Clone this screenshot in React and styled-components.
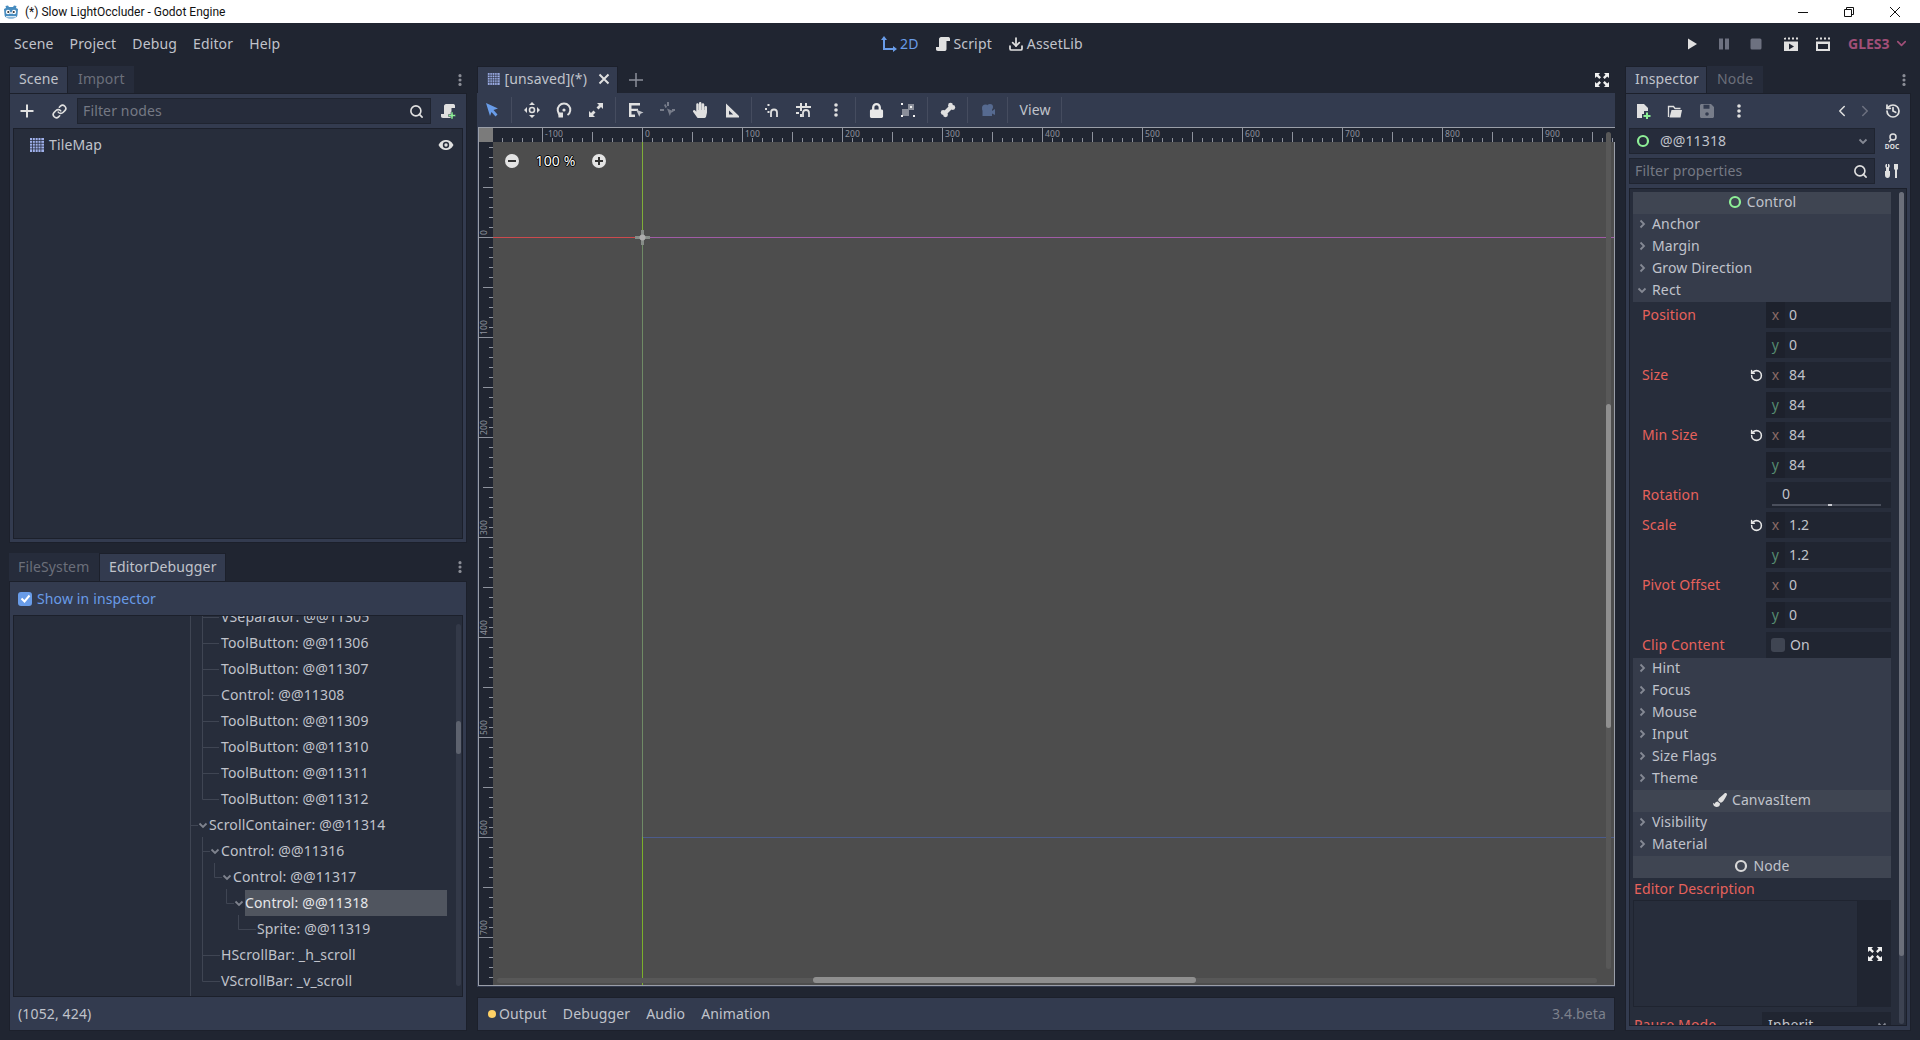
import styled, { createGlobalStyle } from "styled-components";
import { Link, Search, RotateCcw, History, Download, ChevronLeft, ChevronRight, ChevronDown } from "lucide-react";
import { FaHandPaper, FaPaintBrush, FaLock } from "react-icons/fa";

const GlobalStyle = createGlobalStyle`
    html, body {
        margin: 0;
        padding: 0;
        background: #202531;
        overflow: hidden;
    }
    * { box-sizing: border-box; }
`

const Window = styled.div`
    width: 1920px;
    height: 1040px;
    overflow: hidden;
    background: #202531;
    color: #c0c3cb;
    font-family: "Noto Sans", sans-serif;
    font-size: 14px;
    line-height: 20px;
    letter-spacing: 0.14px;
    white-space: nowrap;
`

/* title bar */
const TitleBar = styled.div`
    height: 23px;
    background: #fff;
    color: #111;
    display: flex;
    align-items: center;
    padding-left: 3px;
    font-family: Roboto, sans-serif;
    font-size: 12px;
    letter-spacing: 0;
`
const TitleText = styled.span`
    margin-left: 6px;
`
const WinButtons = styled.div`
    margin-left: auto;
    display: flex;
    gap: 36px;
    padding-right: 20px;
`

/* menu bar */
const MenuBar = styled.div`
    height: 43px;
    padding-bottom: 2px;
    display: flex;
    align-items: center;
`
const MainMenu = styled.div`
    width: 881px;
    padding-left: 14px;
    display: flex;
    gap: 16px;
`
const ModeSwitch = styled.div`
    display: flex;
    gap: 16px;
`
const Mode = styled.div`
    display: flex;
    align-items: center;
    gap: 3px;
    color: ${(p) => (p.$active ? "#699ce8" : "#c0c3cb")};
`
const PlayBar = styled.div`
    margin-left: auto;
    display: flex;
    align-items: center;
`
const PlayButton = styled.div`
    width: 32px;
    margin-left: ${(p) => p.$gap || 0}px;
    display: flex;
    justify-content: center;
`
const Driver = styled.div`
    display: flex;
    align-items: center;
    gap: 4px;
    width: 72px;
    margin-left: 9px;
    color: #a14f78;
    font-weight: 700;
    letter-spacing: 0;
`

/* docks */
const Workspace = styled.div`
    display: flex;
    height: 965px;
    padding-left: 9px;
`
const LeftColumn = styled.div`
    width: 458px;
    display: flex;
    flex-direction: column;
    gap: 10px;
`
const CenterColumn = styled.div`
    width: 1138px;
    margin-left: 10px;
    display: flex;
    flex-direction: column;
`
const RightColumn = styled.div`
    width: 286px;
    margin-left: 10px;
    display: flex;
    flex-direction: column;
`
const Dock = styled.div`
    height: ${(p) => p.$height}px;
    display: flex;
    flex-direction: column;
`
const TabRow = styled.div`
    height: ${(p) => p.$height || 27}px;
    flex: none;
    display: flex;
    align-items: stretch;
`
const Tab = styled.div`
    width: ${(p) => p.$width}px;
    display: flex;
    align-items: center;
    padding-left: ${(p) => (p.$pad === undefined ? 9 : p.$pad)}px;
    padding-bottom: 2px;
    background: ${(p) => (p.$active ? "#333b4f" : "#262c3b")};
    color: ${(p) => (p.$active ? "#c0c3cb" : "#6b6f7a")};
    border: 1px solid ${(p) => (p.$active ? "#1c202b" : "transparent")};
    border-bottom: none;
`
const TabMenu = styled.div`
    margin-left: auto;
    width: 14px;
    display: flex;
    align-items: center;
    justify-content: center;
`
const Panel = styled.div`
    flex: 1;
    min-height: 0;
    background: #333b4f;
    border: 1px solid #1c202b;
    display: flex;
    flex-direction: column;
    position: relative;
`
const ToolRow = styled.div`
    height: 34px;
    flex: none;
    display: flex;
    align-items: center;
    padding-left: 1px;
`
const IconButton = styled.div`
    width: ${(p) => p.$width || 32}px;
    height: 26px;
    flex: none;
    display: flex;
    align-items: center;
    justify-content: center;
`
const SearchBox = styled.div`
    height: 26px;
    width: ${(p) => p.$width}px;
    margin-left: ${(p) => p.$gap || 0}px;
    flex: none;
    display: flex;
    align-items: center;
    justify-content: space-between;
    padding: 0 6px 0 5px;
    background: #262c3b;
    border: 1px solid #1f2430;
    color: #757984;
`
const SceneTree = styled.div`
    flex: 1;
    margin: 0 3px 3px;
    background: #272d3b;
    border: 1px solid #1c202b;
    padding: 3px 17px 3px 15px;
`
const SceneNode = styled.div`
    display: flex;
    align-items: center;
    height: 26px;
    gap: 4px;
`
const EyeSlot = styled.div`
    margin-left: auto;
    margin-right: -9px;
    display: flex;
`

/* debugger */
const CheckRow = styled.div`
    height: 33px;
    flex: none;
    display: flex;
    align-items: center;
    gap: 5px;
    padding-left: 8px;
    color: #699ce8;
`
const CheckMark = styled.div`
    width: 14px;
    height: 14px;
    border-radius: 3px;
    background: #699ce8;
    display: flex;
    align-items: center;
    justify-content: center;
`
const RemoteTree = styled.div`
    height: 382px;
    flex: none;
    margin: 0 3px;
    background: #272d3b;
    border: 1px solid #1c202b;
    position: relative;
    overflow: hidden;
`
const RowList = styled.div`
    margin-top: -12px;
    position: relative;
`
const TreeRow = styled.div`
    height: 26px;
    display: flex;
    align-items: center;
    padding-left: ${(p) => p.$x - 14}px;
`
const RowFold = styled.span`
    width: 10px;
    margin-left: -11px;
    margin-right: 1px;
    display: flex;
    justify-content: center;
`
const RowLabel = styled.span`
    ${(p) => p.$selected && "width: 202px; height: 26px; line-height: 26px; background: #50555f; color: #e6e7ea;"}
`
const TreeLines = styled.svg`
    position: absolute;
    left: 0;
    top: 0;
`
const MousePos = styled.div`
    flex: 1;
    display: flex;
    align-items: center;
    padding-left: 8px;
`
const Track = styled.div`
    position: absolute;
    left: ${(p) => p.$x}px;
    top: ${(p) => p.$y}px;
    width: ${(p) => p.$w}px;
    height: ${(p) => p.$h}px;
    border-radius: 3px;
    background: ${(p) => p.$color};
`

/* main screen */
const ScreenTabs = styled.div`
    height: 27px;
    flex: none;
    display: flex;
    align-items: stretch;
`
const SceneTab = styled.div`
    width: 141px;
    display: flex;
    align-items: center;
    padding-left: 9px;
    padding-bottom: 2px;
    gap: 4px;
    background: #333b4f;
    border: 1px solid #1c202b;
    border-bottom: none;
`
const AddTab = styled.div`
    margin-left: 9px;
    display: flex;
    align-items: center;
    width: 18px;
    justify-content: center;
`
const ScreenCorner = styled.div`
    margin-left: auto;
    margin-right: 5px;
    display: flex;
    align-items: center;
`
const ScreenPanel = styled.div`
    height: 894px;
    flex: none;
    background: #333b4f;
    display: flex;
    flex-direction: column;
`
const CanvasTools = styled.div`
    height: 34px;
    flex: none;
    margin-left: -1px;
    display: flex;
    align-items: center;
`
const ToolSep = styled.div`
    width: 1px;
    height: 26px;
    flex: none;
    margin: 0 4px 0 3px;
    background: #454c5f;
`
const ViewMenu = styled.div`
    width: 46px;
    text-align: center;
`
const Viewport = styled.div`
    height: 859px;
    margin-left: 1px;
    background: #4d4d4d;
    border: 1px solid #9a9ea8;
    position: relative;
`
const RulerArt = styled.svg`
    display: block;
`
const ZoomBar = styled.div`
    position: absolute;
    left: 25px;
    top: 23px;
    display: flex;
    align-items: center;
    color: #fff;
    text-shadow: -1px 0 #000, 1px 0 #000, 0 -1px #000, 0 1px #000;
`
const ZoomLabel = styled.span`
    width: 71px;
    text-align: center;
`
const BottomBar = styled.div`
    margin-top: 10px;
    height: 34px;
    flex: none;
    background: #333b4f;
    border: 1px solid #1c202b;
    display: flex;
    align-items: center;
    padding: 0 0 1px 10px;
`
const DotMark = styled.span`
    width: 8px;
    height: 8px;
    border-radius: 50%;
    background: #ffd166;
    margin-right: 3px;
`
const BottomItem = styled.span`
    margin-right: 16px;
`
const Version = styled.span`
    margin-left: auto;
    margin-right: 8px;
    color: #7d818c;
`

/* inspector */
const InspectorTools = styled.div`
    height: 34px;
    flex: none;
    display: flex;
    align-items: center;
    padding-left: 1px;
`
const NavGroup = styled.div`
    margin-left: auto;
    display: flex;
    align-items: center;
`
const PickerRow = styled.div`
    height: 26px;
    flex: none;
    margin: 0 0 4px 3px;
    display: flex;
    align-items: center;
`
const ObjectPicker = styled.div`
    width: 246px;
    height: 26px;
    display: flex;
    align-items: center;
    padding: 0 6px;
    gap: 10px;
    background: #262c3b;
    border: 1px solid #1f2430;
`
const PickerChevron = styled.span`
    margin-left: auto;
    display: flex;
`
const PropBox = styled.div`
    margin: 0 3px 4px;
    height: 838px;
    flex: none;
    background: #272d3b;
    border: 1px solid #1c202b;
    padding: 3px 0 0 3px;
    overflow: hidden;
    position: relative;
`
const PropColumn = styled.div`
    width: 258px;
    display: flex;
    flex-direction: column;
`
const Category = styled.div`
    height: 22px;
    flex: none;
    padding-bottom: 2px;
    background: #3f4552;
    display: flex;
    align-items: center;
    justify-content: center;
    gap: 5px;
`
const Fold = styled.div`
    height: 22px;
    flex: none;
    background: #363c4b;
    display: flex;
    align-items: center;
    padding: 0 0 2px 4px;
    gap: 5px;
`
const PropList = styled.div`
    display: flex;
    flex-direction: column;
    gap: 4px;
`
const PropRow = styled.div`
    height: 26px;
    flex: none;
    display: flex;
    align-items: center;
`
const PropName = styled.div`
    width: 133px;
    flex: none;
    height: 26px;
    display: flex;
    align-items: center;
    justify-content: space-between;
    padding: 0 3px 0 9px;
    color: #e8625c;
`
const PropField = styled.div`
    flex: 1;
    height: 26px;
    display: flex;
    align-items: center;
    background: #202531;
    position: relative;
`
const Axis = styled.span`
    width: 19px;
    height: 26px;
    line-height: 26px;
    text-align: center;
    background: #1d212c;
    color: ${(p) => (p.$axis === "x" ? "#8a6a66" : "#568a70")};
    margin-right: 4px;
`
const SliderValue = styled.span`
    margin-left: 16px;
    margin-bottom: 2px;
`
const SliderLine = styled.div`
    position: absolute;
    left: 6px;
    right: 10px;
    bottom: 2px;
    height: 2px;
    background: #4a4f5c;
`
const SliderKnob = styled.div`
    position: absolute;
    left: 56px;
    top: 0;
    width: 4px;
    height: 2px;
    background: #c8cad0;
`
const CheckBlank = styled.span`
    width: 14px;
    height: 14px;
    margin: 0 5px;
    border-radius: 3px;
    background: #3f4552;
`
const DescLabel = styled.div`
    height: 22px;
    line-height: 22px;
    flex: none;
    padding-left: 1px;
    color: #e8625c;
`
const DescEditor = styled.div`
    height: 107px;
    flex: none;
    display: flex;
    background: #272d3b;
`
const DescText = styled.div`
    flex: 1;
    border: 1px solid #1f2430;
`
const DescExpand = styled.div`
    width: 33px;
    background: #202531;
    display: flex;
    align-items: center;
    justify-content: center;
`
const PauseRow = styled.div`
    height: 26px;
    flex: none;
    margin-top: 5px;
    display: flex;
    align-items: center;
    color: #e8625c;
    padding-left: 1px;
`
const PauseField = styled.div`
    margin-left: auto;
    width: 129px;
    height: 26px;
    background: #202531;
    color: #c0c3cb;
    display: flex;
    align-items: center;
    justify-content: space-between;
    padding: 0 4px 0 6px;
`

/* icons */
const Ico = ({ size = 16, fill = "#e0e0e0", children, vb = "0 0 16 16" }) => (
    <svg width={size} height={size} viewBox={vb} fill={fill}>{children}</svg>
)

const GodotLogo = () => (
    <Ico size={16}>
        <path fill="#478cbf" d="M1 5l2-1-.5-2 2.500-.5L6 3h4l1-1.500 2.500.5L13 4l2 1-.5 5.500c0 2-1.500 4-6.500 4s-6.500-2-6.500-4z" />
        <circle cx="5" cy="8" r="2.200" fill="#fff" />
        <circle cx="11" cy="8" r="2.200" fill="#fff" />
        <circle cx="5.300" cy="8" r="1.100" fill="#333" />
        <circle cx="10.700" cy="8" r="1.100" fill="#333" />
        <rect x="7.300" y="8" width="1.400" height="2" fill="#fff" />
        <path d="M3 12h10v1.500H3z" fill="#d5e6f2" />
    </Ico>
)
const MinimizeGlyph = () => <Ico size={10} fill="none" vb="0 0 10 10"><path d="M0 5.500h10" stroke="#111" /></Ico>
const RestoreGlyph = () => <Ico size={10} fill="none" vb="0 0 10 10"><path d="M.5 2.500h7v7h-7zM2.500 2.500v-2h7v7h-2" stroke="#111" /></Ico>
const CloseGlyph = () => <Ico size={10} fill="none" vb="0 0 10 10"><path d="M0 0l10 10M10 0L0 10" stroke="#111" /></Ico>

const Axes2D = () => (
    <Ico fill="#699ce8">
        <path d="M3 3v10h9" fill="none" stroke="#699ce8" strokeWidth="2" />
        <path d="M3 0l3 4H0zM16 13l-4-3v6z" />
    </Ico>
)
const scrollPath = "M6 1h7.500c1 0 1.500 1 1.500 2v2h-3.500v8c0 1.500-1 2-2 2H3c-1.500 0-2-1-2-2v-2h3V3c0-1 1-2 2-2z"
const ScriptGlyph = () => <Ico><path d={scrollPath} /></Ico>
const ScriptAdd = () => (
    <Ico>
        <path d={scrollPath} />
        <path d="M11 9h2v2.500h2.500v2H13V16h-2v-2.500H8.500v-2H11z" fill="#8eef97" stroke="#333b4f" strokeWidth=".5" />
    </Ico>
)
const PlayGlyph = () => <Ico><path d="M4 2.500l9 5.500-9 5.500z" /></Ico>
const PauseGlyph = () => <Ico fill="#6d7180"><path d="M3 2.500h4v11H3zM9 2.500h4v11H9z" /></Ico>
const StopGlyph = () => <Ico fill="#6d7180"><rect x="2.500" y="2.500" width="11" height="11" rx="1.500" /></Ico>
const Clapper = ({ inner }) => (
    <Ico>
        <path d="M1 5.500h14V15H1zM1 2l2-.5v2H1zM5 1.500h2v2H5zM9 1.500h2v2H9zM13 1.500h2v2h-2z" />
        {inner}
    </Ico>
)
const MoviePlay = () => <Clapper inner={<path d="M6 7.500l5 3-5 3z" fill="#202531" />} />
const MovieScene = () => <Clapper inner={<rect x="3" y="8" width="10" height="5" fill="#202531" />} />

const Kebab = ({ color = "#8a8d96" }) => (
    <Ico fill={color}>
        <circle cx="8" cy="3" r="1.800" />
        <circle cx="8" cy="8" r="1.800" />
        <circle cx="8" cy="13" r="1.800" />
    </Ico>
)
const PlusGlyph = () => <Ico><path d="M7 1.500h2V7h5.500v2H9v5.500H7V9H1.500V7H7z" /></Ico>
const TileGrid = ({ color = "#a5b7f3" }) => (
    <Ico fill={color}>
        <path d="M1 1h14v14H1z" opacity=".95" />
        <path d="M3.500 1v14M6.300 1v14M9.100 1v14M11.900 1v14M1 3.500h14M1 6.300h14M1 9.100h14M1 11.900h14" stroke="#2b3142" strokeWidth=".8" />
    </Ico>
)
const EyeGlyph = () => (
    <Ico>
        <path fillRule="evenodd" d="M.5 8C2.500 4 5.500 3 8 3s5.500 1 7.500 5c-2 4-5 5-7.500 5S2.500 12 .5 8zM8 4.800a3.200 3.200 0 1 0 0 6.400 3.200 3.200 0 0 0 0-6.400z" />
        <circle cx="8" cy="8" r="1.700" />
    </Ico>
)
const FoldRight = () => <Ico size={10} fill="none" vb="0 0 10 10"><path d="M3.500 1.500L7 5 3.500 8.500" stroke="#858994" strokeWidth="1.800" /></Ico>
const FoldDown = ({ color = "#858994" }) => <Ico size={10} fill="none" vb="0 0 10 10"><path d="M1.500 3.500L5 7l3.500-3.500" stroke={color} strokeWidth="1.800" /></Ico>
const Ring = ({ color }) => <Ico size={14} fill="none" vb="0 0 14 14"><circle cx="7" cy="7" r="5" stroke={color} strokeWidth="2.200" /></Ico>

const SelectArrow = () => (
    <Ico fill="#699ce8">
        <path d="M2 1l12 5.500-4.500 1.500 4 4.500-2 2-4-4.500L6 14z" />
    </Ico>
)
const MoveGlyph = () => (
    <Ico>
        <path d="M8 0l3 3H5zM8 16l3-3H5zM0 8l3-3v6zM16 8l-3-3v6z" />
        <circle cx="8" cy="8" r="2.500" fill="none" stroke="#e0e0e0" strokeWidth="1.600" />
    </Ico>
)
const RotateGlyph = () => (
    <Ico>
        <path d="M4.500 13A6.300 6.300 0 1 1 11.500 13" fill="none" stroke="#e0e0e0" strokeWidth="2" />
        <path d="M2 10.500h5V15.500H2.500z" />
        <circle cx="8" cy="8" r="1.600" />
    </Ico>
)
const ScaleGlyph = () => (
    <Ico>
        <path d="M9 1h6v6l-2-2-2.500 2.500L8.500 5.500 11 3zM7 15H1V9l2 2 2.500-2.500 2 2L5 13z" />
    </Ico>
)
const ListSelect = () => (
    <Ico>
        <path d="M1 1h11v2.500H3.500v3.200H10v2.300H3.500v3.500H7V15H1z" />
        <path d="M8 7.500l7.500 3-3 1.200-1.200 3z" fill="#c4c6cc" />
    </Ico>
)
const PivotGlyph = () => (
    <Ico fill="#777c8a">
        <path d="M7 0h2v4H7zM0 7h4v2H0zM12 7h3v2h-3zM4 3l1.500-1L7 5 5.500 6z" />
        <path d="M7 6.500l7 3-3 1.200-1.200 3.300z" />
    </Ico>
)
const RulerGlyph = () => <Ico><path fillRule="evenodd" d="M2 1.500l13 12.500v1.500H2zM5 8.500v4h4.200z" /></Ico>
const SmartSnap = () => (
    <Ico>
        <path d="M7 15v-4.500a3 3 0 0 1 6 0V15" fill="none" stroke="#e0e0e0" strokeWidth="1.800" />
        <path d="M3.500 2h2v2h-2zM1 6h2v2H1zM3.500 9h2v2h-2z" />
    </Ico>
)
const GridSnap = () => (
    <Ico>
        <path d="M7 15v-4a3 3 0 0 1 6 0v4" fill="none" stroke="#e0e0e0" strokeWidth="1.800" />
        <path d="M4 1h2v3h3V1h2v3h4v2H0V4h4zM4 6h2v3H4zM4 12h2v3H4zM0 10h3v2H0z" />
    </Ico>
)
const GroupGlyph = () => (
    <Ico>
        <path d="M2 7h7V14H2z" fill="#8a8e99" />
        <path d="M8 2h6v6H8z" fill="#8a8e99" />
        <path d="M10 4h2v2h-2zM1 1h2v2H1zM1 13h2v2H1zM13 13h2v2h-2z" fill="#f2f2f2" />
    </Ico>
)
const BoneGlyph = () => (
    <Ico>
        <path d="M4 12L12 4" stroke="#e0e0e0" strokeWidth="4" />
        <circle cx="3.200" cy="10.500" r="2.400" /><circle cx="5.500" cy="12.800" r="2.400" />
        <circle cx="10.500" cy="3.200" r="2.400" /><circle cx="12.800" cy="5.500" r="2.400" />
    </Ico>
)
const CameraGlyph = () => (
    <Ico fill="#566a90">
        <circle cx="5.500" cy="6" r="3.500" /><circle cx="10" cy="5" r="3" />
        <path d="M2.500 7h9.500v7H2.500zM12 9l3-2v6l-3-1.500z" />
    </Ico>
)
const cornerPath = "M1 1h5L4.500 2.800 7 5.300 5.300 7 2.800 4.500 1 6z"
const Corners = ({ color = "#f0f0f0" }) => (
    <Ico fill={color}>
        <path d={cornerPath} />
        <path transform="rotate(90 8 8)" d={cornerPath} />
        <path transform="rotate(180 8 8)" d={cornerPath} />
        <path transform="rotate(270 8 8)" d={cornerPath} />
    </Ico>
)
const NewFile = () => (
    <Ico>
        <path d="M2 1h7l4 4v3H9v3H7v4H2z" />
        <path d="M11 9.500h2V12h2.500v2H13v2h-2v-2H8.500v-2H11z" fill="#8eef97" />
    </Ico>
)
const FolderGlyph = () => (
    <Ico fill="none">
        <path d="M1.500 14V3.500h5l1.500 2h5.500" stroke="#e0e0e0" strokeWidth="1.300" />
        <path d="M2.500 14.500L4.500 7H15l-1.500 7.500z" fill="#e0e0e0" />
    </Ico>
)
const SaveGlyph = () => (
    <Ico fill="#787d8a">
        <path fillRule="evenodd" d="M1 2.500C1 1.700 1.700 1 2.500 1H12l3 3v9.500c0 .8-.7 1.500-1.500 1.500h-11C1.700 15 1 14.300 1 13.500zM4.500 1.800v4h6v-4z" />
        <circle cx="8" cy="11" r="1.800" fill="#333b4f" />
    </Ico>
)
const DocGlyph = () => (
    <svg width="16" height="16" viewBox="0 0 16 16" fill="none">
        <circle cx="9" cy="4" r="3" stroke="#e0e0e0" strokeWidth="1.500" />
        <path d="M7 6.500L5 9" stroke="#e0e0e0" strokeWidth="1.500" />
        <text x="8" y="15.500" textAnchor="middle" fontSize="6.500" fontWeight="700" fill="#e0e0e0" fontFamily="Noto Sans">DOC</text>
    </svg>
)
const ToolsGlyph = () => (
    <Ico>
        <path d="M3 1h1v3h1V1h1c1 1 1 3 0 4v3h1v4c0 2-1 3-2.500 3S2 14 2 12V8h1V5C2 4 2 2 3 1z" transform="translate(-1 0)" />
        <path d="M10 1h4v5l-1 1v8h-2V7l-1-1z" />
    </Ico>
)
const SearchGlyph = () => <Search size={15} strokeWidth={2.6} color="#e0e0e0" />
const RevertGlyph = () => <RotateCcw size={13} strokeWidth={2.8} color="#e8e8e8" />

const KebabTab = () => <TabMenu><Kebab /></TabMenu>

const remoteRows = [
    { x: 221, text: "VSeparator: @@11305" },
    { x: 221, text: "ToolButton: @@11306" },
    { x: 221, text: "ToolButton: @@11307" },
    { x: 221, text: "Control: @@11308" },
    { x: 221, text: "ToolButton: @@11309" },
    { x: 221, text: "ToolButton: @@11310" },
    { x: 221, text: "ToolButton: @@11311" },
    { x: 221, text: "ToolButton: @@11312" },
    { x: 209, text: "ScrollContainer: @@11314", fold: true },
    { x: 221, text: "Control: @@11316", fold: true },
    { x: 233, text: "Control: @@11317", fold: true },
    { x: 245, text: "Control: @@11318", fold: true, selected: true },
    { x: 257, text: "Sprite: @@11319" },
    { x: 221, text: "HScrollBar: _h_scroll" },
    { x: 221, text: "VScrollBar: _v_scroll" },
]

const treeLinePath = [
    "M190.500 616V996",
    "M202.500 616V799.500",
    "M202.500 617.500H219M202.500 643.500H219M202.500 669.500H219M202.500 695.500H219M202.500 721.500H219M202.500 747.500H219M202.500 773.500H219M202.500 799.500H219",
    "M191 825.500H198",
    "M202.500 837V981.500H220M202.500 955.500H220M202.500 851.500H210",
    "M214.500 863V877.500H222",
    "M226.500 889V903.500H234",
    "M238.500 915V929.500H256",
].join(" ")

const rectProps = [
    { label: "Position", axis: "x", value: "0" },
    { axis: "y", value: "0" },
    { label: "Size", revert: true, axis: "x", value: "84" },
    { axis: "y", value: "84" },
    { label: "Min Size", revert: true, axis: "x", value: "84" },
    { axis: "y", value: "84" },
    { label: "Rotation", slider: true, value: "0" },
    { label: "Scale", revert: true, axis: "x", value: "1.2" },
    { axis: "y", value: "1.2" },
    { label: "Pivot Offset", axis: "x", value: "0" },
    { axis: "y", value: "0" },
    { label: "Clip Content", check: true, value: "On" },
]

const PropLine = ({ item }) => (
    <PropRow>
        <PropName>
            <span>{item.label}</span>
            {item.revert && <RevertGlyph />}
        </PropName>
        <PropField>
            {item.axis && <Axis $axis={item.axis}>{item.axis}</Axis>}
            {item.check && <CheckBlank />}
            {item.slider
                ? <>
                    <SliderValue>{item.value}</SliderValue>
                    <SliderLine><SliderKnob /></SliderLine>
                </>
                : item.value}
        </PropField>
    </PropRow>
)

const FoldRow = ({ open, children }) => (
    <Fold>
        {open ? <FoldDown /> : <FoldRight />}
        <span>{children}</span>
    </Fold>
)

// every tick of the canvas rulers is drawn from the scene origin at 642,237
const RulerLines = () => {
    const top = []
    const left = []
    for (let x = 642 - 140; x < 1614; x += 10) {
        const k = (x - 642) / 10
        const y0 = k % 10 === 0 ? 128 : k % 5 === 0 ? 132 : 138
        top.push(<path key={x} d={`M${x + 0.5} ${y0}V142`} stroke="#8e929d" />)
        if (k % 10 === 0) {
            top.push(<text key={"t" + x} x={x + 3} y="137" fontSize="8.500" fill="#8e929d" fontFamily="Noto Sans">{k * 10}</text>)
        }
    }
    for (let y = 237 - 90; y < 985; y += 10) {
        const k = (y - 237) / 10
        const x1 = k % 10 === 0 ? 479 : k % 5 === 0 ? 483 : 489
        left.push(<path key={y} d={`M${x1} ${y + 0.5}H493`} stroke="#8e929d" />)
        if (k % 10 === 0 && k >= 0) {
            left.push(<text key={"t" + y} transform={`translate(487 ${y - 2}) rotate(-90)`} fontSize="8.500" fill="#8e929d" fontFamily="Noto Sans">{k * 10}</text>)
        }
    }
    return (
        <RulerArt width="1136" height="857" viewBox="479 128 1136 857">
            <rect x="493" y="128" width="1122" height="14" fill="#202531" />
            <rect x="479" y="142" width="14" height="844" fill="#202531" />
            <rect x="479" y="128" width="14" height="14" fill="#7b7b7b" />
            {top}
            {left}
            <path d="M642.500 837.500H1614" stroke="#4c5c8c" />
            <path d="M493 237.500H642" stroke="#cc4a4e" />
            <path d="M642 237.500H1614" stroke="#a05ca6" />
            <path d="M642.500 142V237" stroke="#7fae38" />
            <path d="M642.500 237V837" stroke="#6f8a66" />
            <path d="M642.500 837V985" stroke="#7bb02a" />
            <path d="M642.500 230V245M635 237.500H650" stroke="#868c88" strokeWidth="3" />
            <circle cx="642.500" cy="237.500" r="3" fill="#adadad" />
            <rect x="497" y="978" width="1100" height="5" rx="2.500" fill="#585858" />
            <rect x="813" y="977" width="383" height="6" rx="3" fill="#8f8f8f" />
            <rect x="1606" y="132" width="5" height="837" rx="2.500" fill="#585858" />
            <rect x="1606" y="404" width="5" height="324" rx="2.500" fill="#8f8f8f" />
        </RulerArt>
    )
}

const ZoomButton = ({ mark }) => (
    <Ico>
        <circle cx="8" cy="8" r="7" fill="#e4e4e4" />
        <path d={mark} stroke="#333" strokeWidth="2" />
    </Ico>
)

const App = () => {
    return (
        <Window>
            <GlobalStyle />
            <TitleBar>
                <GodotLogo />
                <TitleText>(*) Slow LightOccluder - Godot Engine</TitleText>
                <WinButtons>
                    <MinimizeGlyph />
                    <RestoreGlyph />
                    <CloseGlyph />
                </WinButtons>
            </TitleBar>
            <MenuBar>
                <MainMenu>
                    <span>Scene</span>
                    <span>Project</span>
                    <span>Debug</span>
                    <span>Editor</span>
                    <span>Help</span>
                </MainMenu>
                <ModeSwitch>
                    <Mode $active><Axes2D />2D</Mode>
                    <Mode><ScriptGlyph />Script</Mode>
                    <Mode><Download size={16} strokeWidth={2.6} color="#e0e0e0" />AssetLib</Mode>
                </ModeSwitch>
                <PlayBar>
                    <PlayButton><PlayGlyph /></PlayButton>
                    <PlayButton><PauseGlyph /></PlayButton>
                    <PlayButton><StopGlyph /></PlayButton>
                    <PlayButton $gap={3}><MoviePlay /></PlayButton>
                    <PlayButton><MovieScene /></PlayButton>
                    <Driver>GLES3<ChevronDown size={15} strokeWidth={2.6} color="#a14f78" /></Driver>
                </PlayBar>
            </MenuBar>
            <Workspace>
                <LeftColumn>
                    <Dock $height={477}>
                        <TabRow>
                            <Tab $width={59} $active>Scene</Tab>
                            <Tab $width={66}>Import</Tab>
                            <KebabTab />
                        </TabRow>
                        <Panel>
                            <ToolRow>
                                <IconButton><PlusGlyph /></IconButton>
                                <IconButton><Link size={15} strokeWidth={2.6} color="#e0e0e0" /></IconButton>
                                <SearchBox $width={354} $gap={2}>Filter nodes<SearchGlyph /></SearchBox>
                                <IconButton $width={34}><ScriptAdd /></IconButton>
                            </ToolRow>
                            <SceneTree>
                                <SceneNode>
                                    <TileGrid />
                                    <span>TileMap</span>
                                    <EyeSlot><EyeGlyph /></EyeSlot>
                                </SceneNode>
                            </SceneTree>
                        </Panel>
                    </Dock>
                    <Dock $height={478}>
                        <TabRow $height={28}>
                            <Tab $width={90} $pad={8}>FileSystem</Tab>
                            <Tab $width={127} $active>EditorDebugger</Tab>
                            <KebabTab />
                        </TabRow>
                        <Panel>
                            <CheckRow>
                                <CheckMark>
                                    <svg width="11" height="11" viewBox="0 0 11 11" fill="none"><path d="M1.500 5.500L4.500 8.500 9.500 2.500" stroke="#fff" strokeWidth="2" /></svg>
                                </CheckMark>
                                Show in inspector
                            </CheckRow>
                            <RemoteTree>
                                <TreeLines width="448" height="380" viewBox="14 616 448 380">
                                    <path d={treeLinePath} stroke="#3f4553" fill="none" />
                                </TreeLines>
                                <RowList>
                                    {remoteRows.map((row) => (
                                        <TreeRow key={row.text} $x={row.x}>
                                            {row.fold && <RowFold><FoldDown color="#7f838e" /></RowFold>}
                                            <RowLabel $selected={row.selected}>{row.text}</RowLabel>
                                        </TreeRow>
                                    ))}
                                </RowList>
                                <Track $x={442} $y={8} $w={5} $h={362} $color="#333948" />
                                <Track $x={442} $y={105} $w={5} $h={33} $color="#5d626e" />
                            </RemoteTree>
                            <MousePos>(1052, 424)</MousePos>
                        </Panel>
                    </Dock>
                </LeftColumn>
                <CenterColumn>
                    <ScreenTabs>
                        <SceneTab>
                            <TileGrid />
                            <span>[unsaved](*)</span>
                            <IconButton $width={26}>
                                <svg width="12" height="12" viewBox="0 0 12 12" fill="none"><path d="M1.500 1.500l9 9M10.500 1.500l-9 9" stroke="#e0e0e0" strokeWidth="2" /></svg>
                            </IconButton>
                        </SceneTab>
                        <AddTab>
                            <svg width="14" height="14" viewBox="0 0 14 14" fill="none"><path d="M7 0v14M0 7h14" stroke="#8a8e99" strokeWidth="1.500" /></svg>
                        </AddTab>
                        <ScreenCorner><Corners /></ScreenCorner>
                    </ScreenTabs>
                    <ScreenPanel>
                        <CanvasTools>
                            <IconButton><SelectArrow /></IconButton>
                            <ToolSep />
                            <IconButton><MoveGlyph /></IconButton>
                            <IconButton><RotateGlyph /></IconButton>
                            <IconButton><ScaleGlyph /></IconButton>
                            <ToolSep />
                            <IconButton><ListSelect /></IconButton>
                            <IconButton><PivotGlyph /></IconButton>
                            <IconButton><FaHandPaper size={16} color="#e0e0e0" /></IconButton>
                            <IconButton><RulerGlyph /></IconButton>
                            <ToolSep />
                            <IconButton><SmartSnap /></IconButton>
                            <IconButton><GridSnap /></IconButton>
                            <IconButton><Kebab color="#e0e0e0" /></IconButton>
                            <ToolSep />
                            <IconButton><FaLock size={15} color="#e8e8e8" /></IconButton>
                            <IconButton><GroupGlyph /></IconButton>
                            <ToolSep />
                            <IconButton><BoneGlyph /></IconButton>
                            <ToolSep />
                            <IconButton><CameraGlyph /></IconButton>
                            <ToolSep />
                            <ViewMenu>View</ViewMenu>
                            <ToolSep />
                        </CanvasTools>
                        <Viewport>
                            <RulerLines />
                            <ZoomBar>
                                <ZoomButton mark="M4 8h8" />
                                <ZoomLabel>100 %</ZoomLabel>
                                <ZoomButton mark="M4 8h8M8 4v8" />
                            </ZoomBar>
                        </Viewport>
                    </ScreenPanel>
                    <BottomBar>
                        <DotMark />
                        <BottomItem>Output</BottomItem>
                        <BottomItem>Debugger</BottomItem>
                        <BottomItem>Audio</BottomItem>
                        <BottomItem>Animation</BottomItem>
                        <Version>3.4.beta</Version>
                    </BottomBar>
                </CenterColumn>
                <RightColumn>
                    <TabRow>
                        <Tab $width={82} $active>Inspector</Tab>
                        <Tab $width={56}>Node</Tab>
                        <KebabTab />
                    </TabRow>
                    <Panel>
                        <InspectorTools>
                            <IconButton><NewFile /></IconButton>
                            <IconButton><FolderGlyph /></IconButton>
                            <IconButton><SaveGlyph /></IconButton>
                            <IconButton><Kebab color="#e0e0e0" /></IconButton>
                            <NavGroup>
                                <IconButton $width={23}><ChevronLeft size={18} strokeWidth={2} color="#e0e0e0" /></IconButton>
                                <IconButton $width={23}><ChevronRight size={18} strokeWidth={2} color="#6d7180" /></IconButton>
                                <IconButton $width={34}><History size={16} strokeWidth={2.6} color="#e0e0e0" /></IconButton>
                            </NavGroup>
                        </InspectorTools>
                        <PickerRow>
                            <ObjectPicker>
                                <Ring color="#8eef97" />
                                <span>@@11318</span>
                                <PickerChevron><FoldDown /></PickerChevron>
                            </ObjectPicker>
                            <IconButton $width={34}><DocGlyph /></IconButton>
                        </PickerRow>
                        <PickerRow>
                            <SearchBox $width={246}>Filter properties<SearchGlyph /></SearchBox>
                            <IconButton $width={34}><ToolsGlyph /></IconButton>
                        </PickerRow>
                        <PropBox>
                            <PropColumn>
                                <Category><Ring color="#8eef97" />Control</Category>
                                <FoldRow>Anchor</FoldRow>
                                <FoldRow>Margin</FoldRow>
                                <FoldRow>Grow Direction</FoldRow>
                                <FoldRow open>Rect</FoldRow>
                                <PropList>
                                    {rectProps.map((item, i) => <PropLine key={i} item={item} />)}
                                </PropList>
                                <FoldRow>Hint</FoldRow>
                                <FoldRow>Focus</FoldRow>
                                <FoldRow>Mouse</FoldRow>
                                <FoldRow>Input</FoldRow>
                                <FoldRow>Size Flags</FoldRow>
                                <FoldRow>Theme</FoldRow>
                                <Category><FaPaintBrush size={14} color="#e0e0e0" />CanvasItem</Category>
                                <FoldRow>Visibility</FoldRow>
                                <FoldRow>Material</FoldRow>
                                <Category><Ring color="#d8d8d8" />Node</Category>
                                <DescLabel>Editor Description</DescLabel>
                                <DescEditor>
                                    <DescText />
                                    <DescExpand><Corners /></DescExpand>
                                </DescEditor>
                                <PauseRow>
                                    Pause Mode
                                    <PauseField>Inherit<FoldDown /></PauseField>
                                </PauseRow>
                            </PropColumn>
                            <Track $x={269} $y={3} $w={5} $h={832} $color="#3d4352" />
                            <Track $x={269} $y={3} $w={5} $h={764} $color="#6b6f7a" />
                        </PropBox>
                    </Panel>
                </RightColumn>
            </Workspace>
        </Window>
    )
}

export default App
